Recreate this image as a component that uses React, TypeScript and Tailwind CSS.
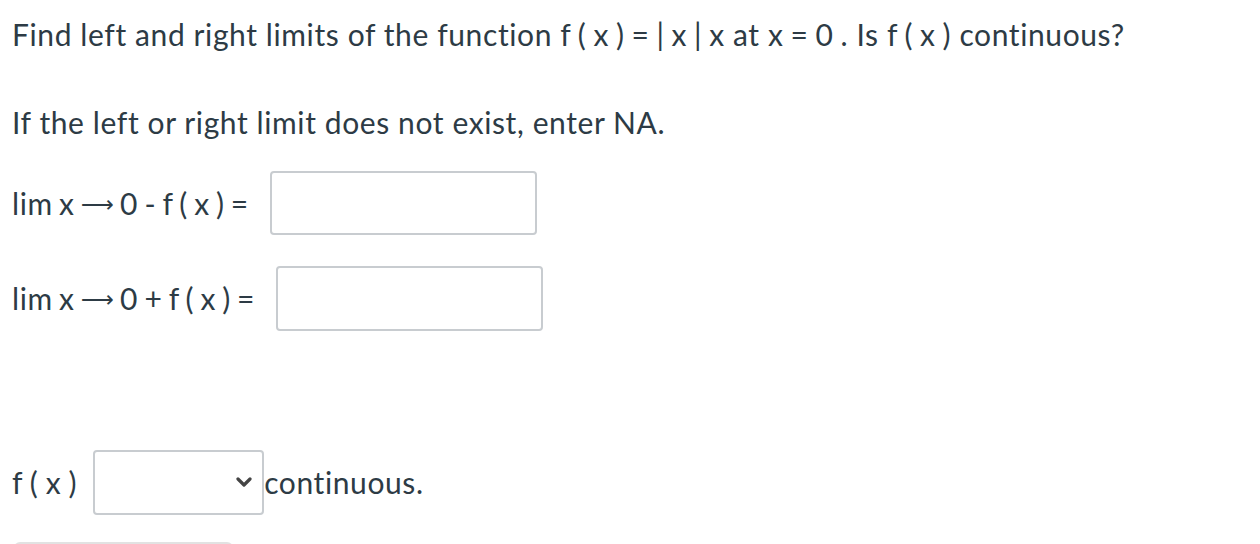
import React from "react";

export default function App() {
  const font = { fontFamily: "Lato, 'Noto Sans', sans-serif" };
  const Arrow = () => (
    <span className="inline-block align-[3px] font-['DejaVu_Sans'] text-[23px] tracking-normal">⟶</span>
  );
  const M = ({ children }: { children: React.ReactNode }) => (
    <span className="[word-spacing:-1.3px]">{children}</span>
  );
  return (
    <div className="min-h-[544px] w-[1260px] overflow-hidden bg-white pl-3 pt-[12px] text-[#2d3b45] tracking-[0.6px]" style={font}>
      <p className="text-[30px] leading-[44px] whitespace-nowrap">
        Find left and right limits of the function <M>f ( x ) = | x | x</M> at <M>x = 0 .</M> Is <M>f ( x )</M> continuous?
      </p>
      <p className="mt-[44px] text-[30px] leading-[44px] whitespace-nowrap">
        If the left or right limit does not exist, enter NA.
      </p>
      <div className="mt-[27px] flex items-center text-[30px] whitespace-nowrap">
        <span className="[word-spacing:-2px]">
          lim x <Arrow /> 0 - f ( x ) =
        </span>
        <input
          type="text"
          className="ml-[21px] h-[64px] w-[267px] rounded-[4px] border-2 border-[#c8ccd0] bg-white"
        />
      </div>
      <div className="mt-[31px] flex items-center text-[30px] whitespace-nowrap">
        <span className="[word-spacing:-2px]">
          lim x <Arrow /> 0 + f ( x ) =
        </span>
        <input
          type="text"
          className="ml-[21px] h-[65px] w-[267px] rounded-[4px] border-2 border-[#c8ccd0] bg-white"
        />
      </div>
      <div className="mt-[119px] flex items-center text-[30px] whitespace-nowrap">
        <span className="[word-spacing:-1px]">f ( x )</span>
        <div className="relative ml-[16px] h-[65px] w-[171px] rounded-[4px] border-2 border-[#c8ccd0] bg-white">
          <svg
            className="absolute right-[10px] top-[25px]"
            width="16"
            height="11"
            viewBox="0 0 16 11"
            fill="none"
            stroke="#444"
            strokeWidth="3.2"
            strokeLinecap="round"
            strokeLinejoin="round"
          >
            <path d="M2 2 L8 8 L14 2" />
          </svg>
        </div>
        <span>continuous.</span>
      </div>
      <div className="ml-[2px] mt-[27px] h-[20px] w-[219px] rounded-t-[6px] bg-[#e2e2e2]" />
    </div>
  );
}
